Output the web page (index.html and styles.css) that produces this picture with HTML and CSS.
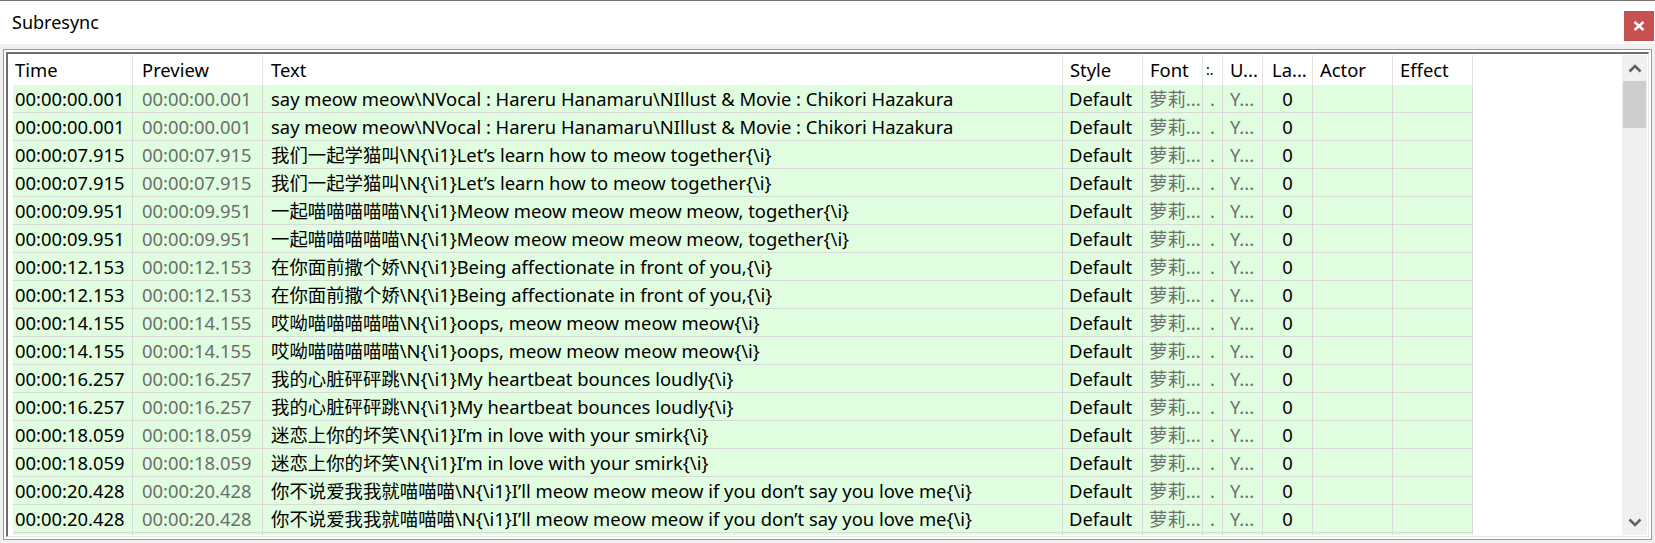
FILE: index.html
```html
<!DOCTYPE html>
<html>
<head>
<meta charset="utf-8">
<title>Subresync</title>
<link rel="stylesheet" href="styles.css">
</head>
<body>
<div class="window">
  <div class="titlebar">
    <div class="title">Subresync</div>
    <div class="close"><svg width="12" height="10" viewBox="0 0 12 10"><path d="M1.5 1 L10.5 9 M10.5 1 L1.5 9" stroke="#fff" stroke-width="2.4"/></svg></div>
  </div>
  <div class="body">
    <div class="frame">
      <div class="inner">
        <div class="list">
          <div class="head">
            <div class="hc c-time">Time</div>
            <div class="hc c-prev">Preview</div>
            <div class="hc c-text">Text</div>
            <div class="hc c-style">Style</div>
            <div class="hc c-font">Font</div>
            <div class="hc c-n">:.</div>
            <div class="hc c-u">U...</div>
            <div class="hc c-la">La...</div>
            <div class="hc c-actor">Actor</div>
            <div class="hc c-eff">Effect</div>
          </div>
          <div class="rows">
            <div class="row"><div class="c c-time">00:00:00.001</div><div class="c c-prev">00:00:00.001</div><div class="c c-text">say meow meow\NVocal : Hareru Hanamaru\NIllust &amp; Movie : Chikori Hazakura</div><div class="c c-style">Default</div><div class="c c-font">萝莉...</div><div class="c c-n">.</div><div class="c c-u">Y...</div><div class="c c-la">0</div><div class="c c-actor"></div><div class="c c-eff"></div></div>
            <div class="row"><div class="c c-time">00:00:00.001</div><div class="c c-prev">00:00:00.001</div><div class="c c-text">say meow meow\NVocal : Hareru Hanamaru\NIllust &amp; Movie : Chikori Hazakura</div><div class="c c-style">Default</div><div class="c c-font">萝莉...</div><div class="c c-n">.</div><div class="c c-u">Y...</div><div class="c c-la">0</div><div class="c c-actor"></div><div class="c c-eff"></div></div>
            <div class="row"><div class="c c-time">00:00:07.915</div><div class="c c-prev">00:00:07.915</div><div class="c c-text">我们一起学猫叫\N{\i1}Let’s learn how to meow together{\i}</div><div class="c c-style">Default</div><div class="c c-font">萝莉...</div><div class="c c-n">.</div><div class="c c-u">Y...</div><div class="c c-la">0</div><div class="c c-actor"></div><div class="c c-eff"></div></div>
            <div class="row"><div class="c c-time">00:00:07.915</div><div class="c c-prev">00:00:07.915</div><div class="c c-text">我们一起学猫叫\N{\i1}Let’s learn how to meow together{\i}</div><div class="c c-style">Default</div><div class="c c-font">萝莉...</div><div class="c c-n">.</div><div class="c c-u">Y...</div><div class="c c-la">0</div><div class="c c-actor"></div><div class="c c-eff"></div></div>
            <div class="row"><div class="c c-time">00:00:09.951</div><div class="c c-prev">00:00:09.951</div><div class="c c-text">一起喵喵喵喵喵\N{\i1}Meow meow meow meow meow, together{\i}</div><div class="c c-style">Default</div><div class="c c-font">萝莉...</div><div class="c c-n">.</div><div class="c c-u">Y...</div><div class="c c-la">0</div><div class="c c-actor"></div><div class="c c-eff"></div></div>
            <div class="row"><div class="c c-time">00:00:09.951</div><div class="c c-prev">00:00:09.951</div><div class="c c-text">一起喵喵喵喵喵\N{\i1}Meow meow meow meow meow, together{\i}</div><div class="c c-style">Default</div><div class="c c-font">萝莉...</div><div class="c c-n">.</div><div class="c c-u">Y...</div><div class="c c-la">0</div><div class="c c-actor"></div><div class="c c-eff"></div></div>
            <div class="row"><div class="c c-time">00:00:12.153</div><div class="c c-prev">00:00:12.153</div><div class="c c-text">在你面前撒个娇\N{\i1}Being affectionate in front of you,{\i}</div><div class="c c-style">Default</div><div class="c c-font">萝莉...</div><div class="c c-n">.</div><div class="c c-u">Y...</div><div class="c c-la">0</div><div class="c c-actor"></div><div class="c c-eff"></div></div>
            <div class="row"><div class="c c-time">00:00:12.153</div><div class="c c-prev">00:00:12.153</div><div class="c c-text">在你面前撒个娇\N{\i1}Being affectionate in front of you,{\i}</div><div class="c c-style">Default</div><div class="c c-font">萝莉...</div><div class="c c-n">.</div><div class="c c-u">Y...</div><div class="c c-la">0</div><div class="c c-actor"></div><div class="c c-eff"></div></div>
            <div class="row"><div class="c c-time">00:00:14.155</div><div class="c c-prev">00:00:14.155</div><div class="c c-text">哎呦喵喵喵喵喵\N{\i1}oops, meow meow meow meow{\i}</div><div class="c c-style">Default</div><div class="c c-font">萝莉...</div><div class="c c-n">.</div><div class="c c-u">Y...</div><div class="c c-la">0</div><div class="c c-actor"></div><div class="c c-eff"></div></div>
            <div class="row"><div class="c c-time">00:00:14.155</div><div class="c c-prev">00:00:14.155</div><div class="c c-text">哎呦喵喵喵喵喵\N{\i1}oops, meow meow meow meow{\i}</div><div class="c c-style">Default</div><div class="c c-font">萝莉...</div><div class="c c-n">.</div><div class="c c-u">Y...</div><div class="c c-la">0</div><div class="c c-actor"></div><div class="c c-eff"></div></div>
            <div class="row"><div class="c c-time">00:00:16.257</div><div class="c c-prev">00:00:16.257</div><div class="c c-text">我的心脏砰砰跳\N{\i1}My heartbeat bounces loudly{\i}</div><div class="c c-style">Default</div><div class="c c-font">萝莉...</div><div class="c c-n">.</div><div class="c c-u">Y...</div><div class="c c-la">0</div><div class="c c-actor"></div><div class="c c-eff"></div></div>
            <div class="row"><div class="c c-time">00:00:16.257</div><div class="c c-prev">00:00:16.257</div><div class="c c-text">我的心脏砰砰跳\N{\i1}My heartbeat bounces loudly{\i}</div><div class="c c-style">Default</div><div class="c c-font">萝莉...</div><div class="c c-n">.</div><div class="c c-u">Y...</div><div class="c c-la">0</div><div class="c c-actor"></div><div class="c c-eff"></div></div>
            <div class="row"><div class="c c-time">00:00:18.059</div><div class="c c-prev">00:00:18.059</div><div class="c c-text">迷恋上你的坏笑\N{\i1}I’m in love with your smirk{\i}</div><div class="c c-style">Default</div><div class="c c-font">萝莉...</div><div class="c c-n">.</div><div class="c c-u">Y...</div><div class="c c-la">0</div><div class="c c-actor"></div><div class="c c-eff"></div></div>
            <div class="row"><div class="c c-time">00:00:18.059</div><div class="c c-prev">00:00:18.059</div><div class="c c-text">迷恋上你的坏笑\N{\i1}I’m in love with your smirk{\i}</div><div class="c c-style">Default</div><div class="c c-font">萝莉...</div><div class="c c-n">.</div><div class="c c-u">Y...</div><div class="c c-la">0</div><div class="c c-actor"></div><div class="c c-eff"></div></div>
            <div class="row"><div class="c c-time">00:00:20.428</div><div class="c c-prev">00:00:20.428</div><div class="c c-text">你不说爱我我就喵喵喵\N{\i1}I’ll meow meow meow if you don’t say you love me{\i}</div><div class="c c-style">Default</div><div class="c c-font">萝莉...</div><div class="c c-n">.</div><div class="c c-u">Y...</div><div class="c c-la">0</div><div class="c c-actor"></div><div class="c c-eff"></div></div>
            <div class="row"><div class="c c-time">00:00:20.428</div><div class="c c-prev">00:00:20.428</div><div class="c c-text">你不说爱我我就喵喵喵\N{\i1}I’ll meow meow meow if you don’t say you love me{\i}</div><div class="c c-style">Default</div><div class="c c-font">萝莉...</div><div class="c c-n">.</div><div class="c c-u">Y...</div><div class="c c-la">0</div><div class="c c-actor"></div><div class="c c-eff"></div></div>
            <div class="row"><div class="c"></div><div class="c"></div><div class="c"></div><div class="c"></div><div class="c"></div><div class="c"></div><div class="c"></div><div class="c"></div><div class="c"></div><div class="c"></div></div>
          </div>
        </div>
        <div class="scrollbar">
          <div class="sb-btn"><svg width="14" height="9" viewBox="0 0 14 9"><path d="M1.5 7.5 L7 2 L12.5 7.5" fill="none" stroke="#606060" stroke-width="2.6"/></svg></div>
          <div class="sb-thumb"></div>
          <div class="sb-track"></div>
          <div class="sb-btn"><svg width="14" height="9" viewBox="0 0 14 9"><path d="M1.5 1.5 L7 7 L12.5 1.5" fill="none" stroke="#606060" stroke-width="2.6"/></svg></div>
        </div>
      </div>
    </div>
  </div>
</div>
</body>
</html>
```

FILE: styles.css
```css
* { box-sizing: border-box; }
html, body {
  margin: 0;
  padding: 0;
}
body {
  width: 1655px;
  height: 543px;
  overflow: hidden;
  background: #f0f0f0;
  font-family: "Noto Sans", "Noto Sans CJK SC", sans-serif;
  color: #000;
}
.window {
  height: 543px;
  border-top: 1px solid #767676;
  display: flex;
  flex-direction: column;
}
.titlebar {
  height: 43px;
  background: #fff;
  display: flex;
  justify-content: space-between;
  align-items: flex-start;
  padding-left: 12px;
  flex: none;
}
.title {
  font-size: 18px;
  line-height: 42px;
}
.close {
  width: 30px;
  height: 30px;
  margin-top: 10px;
  margin-right: 1px;
  background: #c75050;
  display: flex;
  align-items: center;
  justify-content: center;
}
.body {
  flex: 1;
  min-height: 0;
  padding: 5px 3px 3px 3px;
  display: flex;
}
.frame {
  flex: 1;
  min-height: 0;
  border: 1px solid #999;
  background: #fff;
  padding: 2px;
  display: flex;
}
.inner {
  flex: 1;
  min-height: 0;
  border-top: 2px solid #6e6e6e;
  border-left: 2px solid #6e6e6e;
  border-right: 1px solid #e3e3e3;
  border-bottom: 1px solid #e3e3e3;
  padding: 1px;
  display: flex;
  min-width: 0;
}
.list {
  flex: 1;
  min-height: 0;
  overflow: hidden;
  background: #fff;
  min-width: 0;
  font-size: 18.4px;
}
.head, .row {
  display: grid;
  grid-template-columns: 120px 130px 800px 80px 60px 20px 40px 50px 80px 80px;
  margin-left: 4px;
}
.head {
  height: 30px;
}
.hc {
  border-right: 1px solid #e3e3e3;
  line-height: 29px;
  padding-left: 7px;
  white-space: nowrap;
  overflow: hidden;
}
.head .c-time { padding-left: 2px; }
.head .c-prev { padding-left: 9px; }
.head .c-text { padding-left: 8px; }
.head .c-n { padding-left: 3px; font-size: 14px; }
.head .c-la { padding-left: 9px; }
.row {
  height: 28px;
}
.c {
  background: #e0fde0;
  border-right: 1px solid #d9d9d9;
  border-bottom: 1px solid #d9d9d9;
  line-height: 27px;
  white-space: nowrap;
  overflow: hidden;
  padding-left: 6px;
}
.row .c-time { padding-left: 2px; }
.row .c-prev { padding-left: 9px; color: #6d6d6d; }
.row .c-text { padding-left: 8px; }
.row .c-font { color: #6d6d6d; }
.row .c-n { color: #6d6d6d; padding-left: 7px; }
.row .c-u { color: #6d6d6d; padding-left: 7px; }
.row .c-la { text-align: center; padding-left: 0; }
.scrollbar {
  width: 25px;
  background: #f0f0f0;
  display: flex;
  flex-direction: column;
  flex: none;
}
.sb-btn {
  height: 26px;
  display: flex;
  align-items: center;
  justify-content: center;
}
.sb-thumb {
  height: 47px;
  background: #cdcdcd;
  margin: 0 1px;
}
.sb-track {
  flex: 1;
}
```
